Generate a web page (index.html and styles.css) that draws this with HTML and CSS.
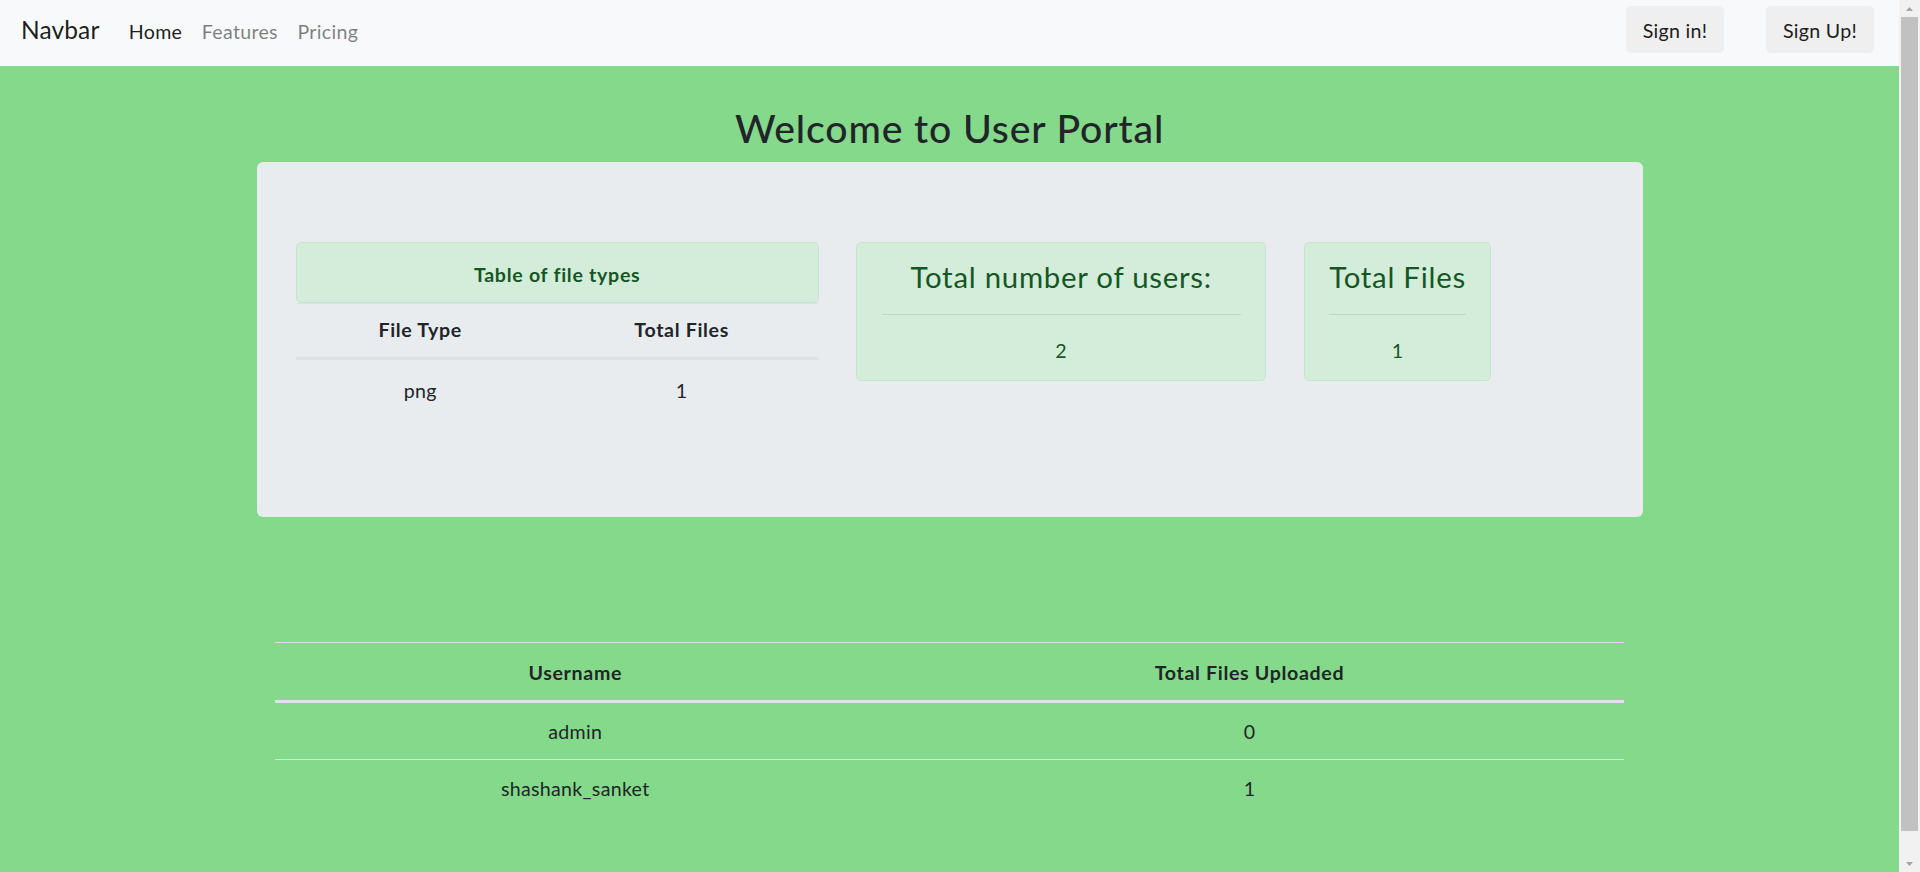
FILE: index.html
```html
<!DOCTYPE html>
<html lang="en">
<head>
<meta charset="utf-8">
<title>User Portal</title>
<link rel="stylesheet" href="styles.css">
</head>
<body>
<div class="page">
  <nav class="navbar">
    <a class="brand" href="#">Navbar</a>
    <ul class="nav-links">
      <li><a class="nav-link active" href="#">Home</a></li>
      <li><a class="nav-link" href="#">Features</a></li>
      <li><a class="nav-link" href="#">Pricing</a></li>
    </ul>
    <div class="nav-actions">
      <button class="btn btn-in">Sign in!</button>
      <button class="btn btn-up">Sign Up!</button>
    </div>
  </nav>
  <main class="main">
    <h2 class="title">Welcome to User Portal</h2>
    <section class="jumbotron">
      <div class="stats">
        <div class="types">
          <div class="alert alert-head">Table of file types</div>
          <table class="tbl tbl-types">
            <thead>
              <tr><th class="col-type">File Type</th><th>Total Files</th></tr>
            </thead>
            <tbody>
              <tr><td>png</td><td>1</td></tr>
            </tbody>
          </table>
        </div>
        <div class="alert stat stat-users">
          <h4 class="stat-title">Total number of users:</h4>
          <hr class="stat-rule">
          <p class="stat-value">2</p>
        </div>
        <div class="alert stat stat-files">
          <h4 class="stat-title">Total Files</h4>
          <hr class="stat-rule">
          <p class="stat-value">1</p>
        </div>
      </div>
    </section>
    <table class="tbl tbl-users">
      <thead>
        <tr><th class="col-user">Username</th><th>Total Files Uploaded</th></tr>
      </thead>
      <tbody>
        <tr><td>admin</td><td>0</td></tr>
        <tr><td>shashank_sanket</td><td>1</td></tr>
      </tbody>
    </table>
  </main>
</div>
<div class="scrollbar">
  <div class="sb-btn"><svg width="7" height="4" viewBox="0 0 7 4"><path d="M3.5 0L7 4H0z" fill="#a3a3a3"/></svg></div>
  <div class="sb-track"><div class="sb-thumb"></div></div>
  <div class="sb-btn"><svg width="7" height="4" viewBox="0 0 7 4"><path d="M0 0H7L3.5 4z" fill="#a3a3a3"/></svg></div>
</div>
</body>
</html>
```
FILE: styles.css
```css
html {
  overflow: hidden;
}

body {
  margin: 0;
  height: 872px;
  display: flex;
  overflow: hidden;
  font-family: Lato, "Open Sans", "Liberation Sans", sans-serif;
  font-size: 19.6px;
  line-height: 29.4px;
  letter-spacing: 0.015em;
  color: #212529;
  background: #85d98a;
}

.page {
  flex: 1;
  min-width: 0;
  height: 872px;
  overflow: hidden;
  background: #85d98a;
}

/* navbar */
.navbar {
  display: flex;
  align-items: flex-start;
  height: 66px;
  box-sizing: border-box;
  padding: 0 25px 0 21px;
  background: #f8f9fa;
}

.brand {
  font-size: 24.5px;
  line-height: 36.75px;
  letter-spacing: 0.005em;
  margin-top: 12px;
  margin-right: 19.6px;
  color: rgba(0, 0, 0, 0.9);
  text-decoration: none;
}

.nav-links {
  display: flex;
  list-style: none;
  margin: 17px 0 0;
  padding: 0;
}

.nav-link {
  display: block;
  padding: 0 9.8px;
  color: rgba(0, 0, 0, 0.5);
  text-decoration: none;
}

.nav-link.active {
  color: rgba(0, 0, 0, 0.9);
}

.nav-actions {
  display: flex;
  gap: 42px;
  margin-left: auto;
  margin-top: 6px;
}

.btn {
  font: inherit;
  font-size: 19.6px;
  line-height: 29.4px;
  letter-spacing: 0.015em;
  height: 47px;
  padding: 2px 0 0;
  border: 0;
  border-radius: 5px;
  background: #efefef;
  color: #1c1c1c;
}

.btn-in {
  width: 98px;
}

.btn-up {
  width: 108px;
}

/* main */
.main {
  padding-top: 38px;
}

.title {
  margin: 0 0 11px;
  font-size: 39.2px;
  line-height: 47px;
  font-weight: 500;
  letter-spacing: 0.022em;
  text-align: center;
  color: #212529;
}

.jumbotron {
  width: 1386px;
  box-sizing: border-box;
  margin: 0 auto;
  padding: 80px 39.2px 97px;
  background: #e9ecef;
  border-radius: 6px;
}

.stats {
  display: flex;
  align-items: flex-start;
  gap: 37.5px;
}

.types {
  width: 523px;
  flex: none;
}

.alert {
  box-sizing: border-box;
  background: #d4edda;
  border: 1px solid #c3e6cb;
  border-radius: 5px;
  color: #155724;
  padding: 14.7px 24.5px;
}

.alert-head {
  padding-top: 16.7px;
  padding-bottom: 12.7px;
  font-weight: 700;
  letter-spacing: 0.036em;
  text-align: center;
}

.stat {
  flex: none;
  text-align: center;
}

.stat-users {
  width: 410px;
}

.stat-title {
  margin: 0 0 9.8px;
  font-size: 29.4px;
  line-height: 37px;
  font-weight: 400;
  letter-spacing: 0.025em;
}

.stat-rule {
  margin: 19.6px 0;
  border: 0;
  border-top: 1px solid #b1dfbb;
}

.stat-value {
  margin: 0;
  padding-top: 1.5px;
}

/* tables */
.tbl {
  border-collapse: collapse;
  text-align: center;
}

.tbl th,
.tbl td {
  padding: 14px;
  border-top: 1px solid #dee2e6;
  font-weight: 400;
}

.tbl thead th {
  font-weight: 700;
  letter-spacing: 0.034em;
  border-bottom: 3px solid #dee2e6;
}

.tbl-types {
  width: 523px;
}

.tbl-types thead th {
  padding: 11px 14px 13px;
}

.tbl-types td {
  padding: 16px 14px 14px;
}

.col-type {
  width: 249px;
  box-sizing: border-box;
}

.tbl-users {
  width: 1348.5px;
  margin: 125px auto 0;
}

.tbl-users th {
  padding: 15.5px 14px 12px;
}

.tbl-users td {
  padding: 14px 14px 13px;
}

.col-user {
  width: 600px;
  box-sizing: border-box;
}

/* scrollbar */
.scrollbar {
  width: 21px;
  flex: none;
  height: 872px;
  display: flex;
  flex-direction: column;
  background: #f1f1f1;
}

.sb-btn {
  height: 17px;
  display: flex;
  align-items: center;
  justify-content: center;
}

.sb-track {
  flex: 1;
  padding: 0 2px;
}

.sb-thumb {
  height: 814px;
  background: #c1c1c1;
}
```
